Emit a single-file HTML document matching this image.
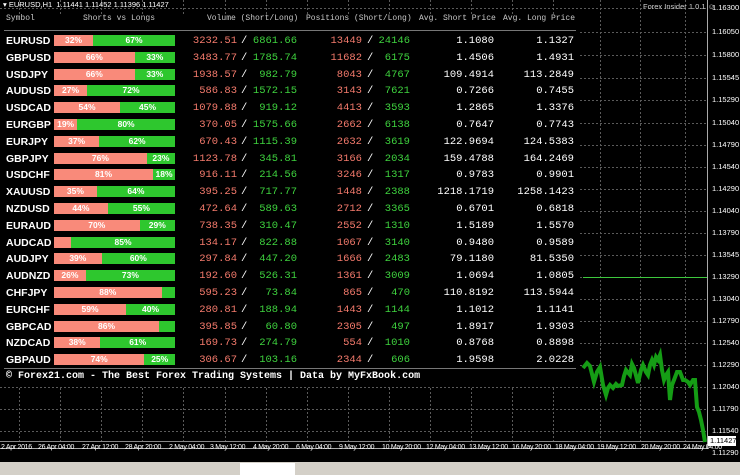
<!DOCTYPE html>
<html><head><meta charset="utf-8"><style>
*{margin:0;padding:0;box-sizing:border-box}
body{width:740px;height:475px;background:#000;position:relative;overflow:hidden;font-family:"Liberation Mono",monospace;font-size:10.5px;color:#fff}
.a{position:absolute;white-space:nowrap}
.r{position:absolute;height:17px;left:0;width:580px}
.sym{position:absolute;left:6px;top:2px;font-family:"Liberation Sans",sans-serif;font-weight:bold;font-size:10.5px;color:#fff}
.bar{position:absolute;left:54px;top:2px;width:121px;height:11px;background:#2ec72e;display:flex;font-family:"Liberation Sans",sans-serif;font-size:8.5px;font-weight:bold;color:#fff;line-height:11px}
.bar i{font-style:normal;background:#f98a7a;text-align:center;display:block}
.bar b{flex:1;text-align:center;display:block}
.n{position:absolute;top:2px;text-align:right}
.red{color:#f47a6c}.grn{color:#3ed23e}
.hd{color:#c8c8c8;font-size:8px;top:14px}
.ax{position:absolute;left:712px;font-family:"Liberation Sans",sans-serif;font-size:7.5px;color:#fff}
.tl{position:absolute;top:444px;font-family:"Liberation Sans",sans-serif;font-size:7px;letter-spacing:-0.3px;color:#fff}
</style></head><body>
<svg class="a" style="left:0;top:0" width="740" height="475">
<g stroke="#5a5a5a" stroke-width="1" stroke-dasharray="2,2">
<line x1="0" y1="8.5" x2="706" y2="8.5"/><line x1="0" y1="32.5" x2="706" y2="32.5"/><line x1="0" y1="55.5" x2="706" y2="55.5"/><line x1="0" y1="78.5" x2="706" y2="78.5"/><line x1="0" y1="100.5" x2="706" y2="100.5"/><line x1="0" y1="123.5" x2="706" y2="123.5"/><line x1="0" y1="145.5" x2="706" y2="145.5"/><line x1="0" y1="167.5" x2="706" y2="167.5"/><line x1="0" y1="189.5" x2="706" y2="189.5"/><line x1="0" y1="211.5" x2="706" y2="211.5"/><line x1="0" y1="233.5" x2="706" y2="233.5"/><line x1="0" y1="255.5" x2="706" y2="255.5"/><line x1="0" y1="277.5" x2="706" y2="277.5"/><line x1="0" y1="299.5" x2="706" y2="299.5"/><line x1="0" y1="321.5" x2="706" y2="321.5"/><line x1="0" y1="343.5" x2="706" y2="343.5"/><line x1="0" y1="365.5" x2="706" y2="365.5"/><line x1="0" y1="387.5" x2="706" y2="387.5"/><line x1="0" y1="409.5" x2="706" y2="409.5"/><line x1="0" y1="431.5" x2="706" y2="431.5"/>
<line x1="19.5" y1="0" x2="19.5" y2="441"/><line x1="60.5" y1="0" x2="60.5" y2="441"/><line x1="101.5" y1="0" x2="101.5" y2="441"/><line x1="142.5" y1="0" x2="142.5" y2="441"/><line x1="183.5" y1="0" x2="183.5" y2="441"/><line x1="225.5" y1="0" x2="225.5" y2="441"/><line x1="266.5" y1="0" x2="266.5" y2="441"/><line x1="307.5" y1="0" x2="307.5" y2="441"/><line x1="348.5" y1="0" x2="348.5" y2="441"/><line x1="389.5" y1="0" x2="389.5" y2="441"/><line x1="430.5" y1="0" x2="430.5" y2="441"/><line x1="471.5" y1="0" x2="471.5" y2="441"/><line x1="512.5" y1="0" x2="512.5" y2="441"/><line x1="553.5" y1="0" x2="553.5" y2="441"/><line x1="600.5" y1="0" x2="600.5" y2="441"/><line x1="640.5" y1="0" x2="640.5" y2="441"/><line x1="685.5" y1="0" x2="685.5" y2="441"/>
</g>
<rect x="0" y="14" width="578" height="372" fill="#000"/>
<line x1="583" y1="277.5" x2="707" y2="277.5" stroke="#3ec83e" stroke-width="1"/>
<line x1="0" y1="441.5" x2="706" y2="441.5" stroke="#888" stroke-width="1"/>
<polyline fill="none" stroke="#159d15" stroke-width="4" points="583,368 587,363 590,366 594,382 597,372 600,367 603,385 606,395 608,388 610,385 613,388 616,384 618,386 622,385 624,376 626,370 630,375 632,364 634,368 638,383 641,370 643,365 646,372 648,375 650,365 652,360 654,365 656,357 658,360 660,355 662,370 664,380 666,375 668,372 670,400 672,385 674,380 677,372 680,372 683,380 685,380 688,382 690,385 693,380 695,380 697,407 699,412 701,420 703,430 705,442"/>
<line x1="707.5" y1="0" x2="707.5" y2="448" stroke="#aaa"/>
<line x1="0" y1="448.5" x2="708" y2="448.5" stroke="#aaa"/>
<line x1="4" y1="30.5" x2="576" y2="30.5" stroke="#777"/>
<line x1="4" y1="368.5" x2="576" y2="368.5" stroke="#777"/>
<rect x="0" y="462" width="740" height="13" fill="#d4d0c8"/>
<rect x="240" y="463" width="55" height="12" fill="#fff"/>
</svg>
<div class="a" style="left:3px;top:0;font-family:'Liberation Sans',sans-serif;font-size:7.5px">▾ EURUSD,H1 &nbsp;1.11441 1.11452 1.11396 1.11427</div>
<div class="a" style="left:643px;top:2px;font-family:'Liberation Sans',sans-serif;font-size:7.5px;color:#ccc">Forex Insider 1.0.1 ☺</div>
<div class="a hd" style="left:6px">Symbol</div>
<div class="a hd" style="left:83px">Shorts vs Longs</div>
<div class="a hd" style="left:207px">Volume (Short/Long)</div>
<div class="a hd" style="left:306px">Positions (Short/Long)</div>
<div class="a hd" style="left:419px">Avg. Short Price</div>
<div class="a hd" style="left:503px">Avg. Long Price</div>
<div id="rows"></div>
<div class="a" style="left:6px;top:371px;font-size:10px;font-weight:bold">© Forex21.com - The Best Forex Trading Systems | Data by MyFxBook.com</div>
<div class="ax" style="top:3px">1.16300</div><div class="ax" style="top:27px">1.16050</div><div class="ax" style="top:50px">1.15800</div><div class="ax" style="top:73px">1.15545</div><div class="ax" style="top:95px">1.15290</div><div class="ax" style="top:118px">1.15040</div><div class="ax" style="top:140px">1.14790</div><div class="ax" style="top:162px">1.14540</div><div class="ax" style="top:184px">1.14290</div><div class="ax" style="top:206px">1.14040</div><div class="ax" style="top:228px">1.13790</div><div class="ax" style="top:250px">1.13545</div><div class="ax" style="top:272px">1.13290</div><div class="ax" style="top:294px">1.13040</div><div class="ax" style="top:316px">1.12790</div><div class="ax" style="top:338px">1.12540</div><div class="ax" style="top:360px">1.12290</div><div class="ax" style="top:382px">1.12040</div><div class="ax" style="top:404px">1.11790</div><div class="ax" style="top:426px">1.11540</div><div class="ax" style="top:448px">1.11290</div>
<div class="a" style="left:708px;top:436px;width:28px;height:10px;background:#fff;color:#000;font-family:'Liberation Sans',sans-serif;font-size:7.5px;padding-left:2px">1.11427</div>
<div class="tl" style="left:1px">2 Apr 2016</div><div class="tl" style="left:38px">26 Apr 04:00</div><div class="tl" style="left:82px">27 Apr 12:00</div><div class="tl" style="left:125px">28 Apr 20:00</div><div class="tl" style="left:169px">2 May 04:00</div><div class="tl" style="left:210px">3 May 12:00</div><div class="tl" style="left:253px">4 May 20:00</div><div class="tl" style="left:296px">6 May 04:00</div><div class="tl" style="left:339px">9 May 12:00</div><div class="tl" style="left:382px">10 May 20:00</div><div class="tl" style="left:426px">12 May 04:00</div><div class="tl" style="left:469px">13 May 12:00</div><div class="tl" style="left:512px">16 May 20:00</div><div class="tl" style="left:555px">18 May 04:00</div><div class="tl" style="left:597px">19 May 12:00</div><div class="tl" style="left:641px">20 May 20:00</div><div class="tl" style="left:683px">24 May 04:00</div>
<script>
var d=[["EURUSD",32,67,"3232.51","6861.66","13449","24146","1.1080","1.1327"],["GBPUSD",66,33,"3483.77","1785.74","11682","6175","1.4506","1.4931"],["USDJPY",66,33,"1938.57","982.79","8043","4767","109.4914","113.2849"],["AUDUSD",27,72,"586.83","1572.15","3143","7621","0.7266","0.7455"],["USDCAD",54,45,"1079.88","919.12","4413","3593","1.2865","1.3376"],["EURGBP",19,80,"370.05","1575.66","2662","6138","0.7647","0.7743"],["EURJPY",37,62,"670.43","1115.39","2632","3619","122.9694","124.5383"],["GBPJPY",76,23,"1123.78","345.81","3166","2034","159.4788","164.2469"],["USDCHF",81,18,"916.11","214.56","3246","1317","0.9783","0.9901"],["XAUUSD",35,64,"395.25","717.77","1448","2388","1218.1719","1258.1423"],["NZDUSD",44,55,"472.64","589.63","2712","3365","0.6701","0.6818"],["EURAUD",70,29,"738.35","310.47","2552","1310","1.5189","1.5570"],["AUDCAD",14,85,"134.17","822.88","1067","3140","0.9480","0.9589"],["AUDJPY",39,60,"297.84","447.20","1666","2483","79.1180","81.5350"],["AUDNZD",26,73,"192.60","526.31","1361","3009","1.0694","1.0805"],["CHFJPY",88,11,"595.23","73.84","865","470","110.8192","113.5944"],["EURCHF",59,40,"280.81","188.94","1443","1144","1.1012","1.1141"],["GBPCAD",86,13,"395.85","60.80","2305","497","1.8917","1.9303"],["NZDCAD",38,61,"169.73","274.79","554","1010","0.8768","0.8898"],["GBPAUD",74,25,"306.67","103.16","2344","606","1.9598","2.0228"]];
var h="";d.forEach(function(r,i){var t=33+i*16.8;var sl=r[1]<15?"":r[1]+"%";var ll=r[2]<15?"":r[2]+"%";
h+='<div class="r" style="top:'+t+'px"><div class="sym">'+r[0]+'</div><div class="bar"><i style="width:'+(r[1]/(r[1]+r[2])*100)+'%">'+sl+'</i><b>'+ll+'</b></div>'+
'<div class="n red" style="right:'+(580-237)+'px">'+r[3]+'</div><div class="n" style="left:241px">/</div><div class="n grn" style="right:'+(580-297)+'px">'+r[4]+'</div>'+
'<div class="n red" style="right:'+(580-362)+'px">'+r[5]+'</div><div class="n" style="left:367px">/</div><div class="n grn" style="right:'+(580-410)+'px">'+r[6]+'</div>'+
'<div class="n" style="right:'+(580-494)+'px">'+r[7]+'</div><div class="n" style="right:'+(580-574)+'px">'+r[8]+'</div></div>';});
document.getElementById("rows").innerHTML=h;
</script>
</body></html>
